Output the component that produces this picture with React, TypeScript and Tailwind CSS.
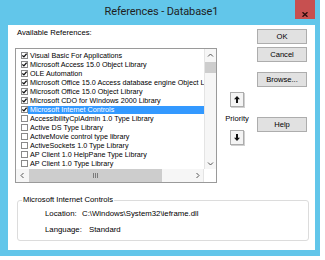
import React from "react";

const ITEMS: [string, boolean][] = [
  ["Visual Basic For Applications", true],
  ["Microsoft Access 15.0 Object Library", true],
  ["OLE Automation", true],
  ["Microsoft Office 15.0 Access database engine Object Library", true],
  ["Microsoft Office 15.0 Object Library", true],
  ["Microsoft CDO for Windows 2000 Library", true],
  ["Microsoft Internet Controls", true],
  ["AccessibilityCplAdmin 1.0 Type Library", false],
  ["Active DS Type Library", false],
  ["ActiveMovie control type library", false],
  ["ActiveSockets 1.0 Type Library", false],
  ["AP Client 1.0 HelpPane Type Library", false],
  ["AP Client 1.0 Type Library", false],
  ["AppIdPolicyEngineApi 1.0 Type Library", false],
];

const SELECTED = 6;

const CheckBox = ({ on }: { on: boolean }) => (
  <span className="flex h-[7px] w-[7px] shrink-0 items-center justify-center border border-[#8a8a8a] bg-white">
    {on && (
      <svg width="5" height="5" viewBox="0 0 5 5">
        <path d="M0.4 2.4 L1.9 3.9 L4.6 0.7" stroke="#111" strokeWidth="1.3" fill="none" />
      </svg>
    )}
  </span>
);

const Chevron = ({ dir }: { dir: "up" | "down" | "left" | "right" }) => {
  const d = {
    up: "M1 4.5 L3.5 2 L6 4.5",
    down: "M1 2.5 L3.5 5 L6 2.5",
    left: "M4.5 1 L2 3.5 L4.5 6",
    right: "M2.5 1 L5 3.5 L2.5 6",
  }[dir];
  return (
    <svg width="7" height="7" viewBox="0 0 7 7">
      <path d={d} stroke="#555" strokeWidth="1" fill="none" />
    </svg>
  );
};

const Button = ({ label, className }: { label: string; className: string }) => (
  <div
    className={`flex h-[15px] w-[50px] items-center justify-center border border-[#adadad] bg-[#e1e1e1] text-[7.6px] text-black ${className}`}
  >
    {label}
  </div>
);

const ArrowButton = ({ up }: { up: boolean }) => (
  <div className="flex h-[15px] w-[14px] items-center justify-center border border-[#acacac] bg-[#f4f4f4] shadow-[1px_1px_0_#d0d0d0]">
    <svg width="6" height="7" viewBox="0 0 6 7">
      {up ? (
        <path d="M3 0 L6 3.2 L4 3.2 L4 7 L2 7 L2 3.2 L0 3.2 Z" fill="#111" />
      ) : (
        <path d="M3 7 L6 3.8 L4 3.8 L4 0 L2 0 L2 3.8 L0 3.8 Z" fill="#111" />
      )}
    </svg>
  </div>
);

const RefList = () => (
  <div className="flex h-[135px] w-[202px] flex-col border border-[#9a9a9a] bg-white">
    <div className="flex h-[120px]">
      <div className="flex-1 overflow-hidden pt-[2px]">
        {ITEMS.map(([name, on], i) => (
          <div key={name} className="flex h-[9px] items-center pl-[5px]">
            <CheckBox on={on} />
            <span
              className={
                i === SELECTED
                  ? "h-[8px] flex-1 whitespace-nowrap bg-[#3399ff] pl-[2px] leading-[8px] text-white"
                  : "h-[8px] flex-1 whitespace-nowrap pl-[2px] leading-[8px] text-black"
              }
            >
              {name}
            </span>
          </div>
        ))}
      </div>
      <div className="flex w-[12px] flex-col border-l border-[#e4e4e4] bg-[#f6f6f6]">
        <div className="flex h-[12px] items-center justify-center">
          <Chevron dir="up" />
        </div>
        <div className="mt-[1px] h-[11px] bg-[#cdcdcd]" />
        <div className="flex-1" />
        <div className="flex h-[12px] items-center justify-center">
          <Chevron dir="down" />
        </div>
      </div>
    </div>
    <div className="flex h-[13px]">
      <div className="flex h-full w-[13px] items-center justify-center bg-[#f6f6f6]">
        <Chevron dir="left" />
      </div>
      <div className="flex h-full w-[133px] items-center justify-center bg-[#cdcdcd]">
        <svg width="5" height="5" viewBox="0 0 5 5">
          <path d="M0.5 0 V5 M2.5 0 V5 M4.5 0 V5" stroke="#666" strokeWidth="0.8" />
        </svg>
      </div>
      <div className="flex-1 bg-[#f6f6f6]" />
      <div className="flex h-full w-[12px] items-center justify-center border-r border-[#e4e4e4] bg-[#f6f6f6]">
        <Chevron dir="right" />
      </div>
      <div className="w-[12px] bg-white" />
    </div>
  </div>
);

export default function App() {
  return (
    <div className="h-[260px] w-[325px] overflow-hidden bg-white font-['Liberation_Sans',Arial,sans-serif]">
      <div className="flex h-[256px] w-[320px] flex-col bg-[#62c6ea]">
        <div className="relative flex h-[25px] items-center justify-center">
          <span className="ml-[3px] font-['Roboto',sans-serif] text-[11px] tracking-[-0.1px] text-[#1e1e1e]">
            References - Database1
          </span>
          <div className="absolute right-[5px] top-0 flex h-[19px] w-[20px] justify-center bg-[#c75050] pt-[12px]">
            <svg width="6" height="5" viewBox="0 0 6 5">
              <path d="M0.5 0.3 L5.5 4.7 M5.5 0.3 L0.5 4.7" stroke="#2a0c0c" strokeWidth="1.4" />
            </svg>
          </div>
        </div>

        <div className="ml-[8px] mr-[5px] flex h-[225px] flex-col bg-white">
          <div className="flex items-start">
            <div className="flex w-[209px] flex-col pl-[7px]">
              <div className="ml-[2px] mt-[3px] h-[10px] text-[7.7px] leading-[10px] text-black">
                Available References:
              </div>
              <div className="mt-[10px] text-[7.2px]">
                <RefList />
              </div>
            </div>

            <div className="mt-[67px] flex w-[40px] flex-col items-center">
              <ArrowButton up />
              <div className="h-[23px] text-[7.6px] leading-[23px] text-black">Priority</div>
              <ArrowButton up={false} />
            </div>

            <div className="flex flex-col">
              <Button label="OK" className="mt-[4px]" />
              <Button label="Cancel" className="mt-[3px]" />
              <Button label="Browse..." className="mt-[10px]" />
              <Button label="Help" className="mt-[30px]" />
            </div>
          </div>

          <fieldset className="ml-[9px] mt-[12px] h-[46px] w-[292px] rounded-[3px] border border-[#dcdcdc]">
            <legend className="ml-[4px] px-[1px] text-[7.7px] leading-[10px] text-black">
              Microsoft Internet Controls
            </legend>
            <div className="mt-[4px] flex h-[10px] items-center pl-[27px] text-[7.8px] text-black">
              <span className="w-[37px]">Location:</span>
              <span>C:\Windows\System32\ieframe.dll</span>
            </div>
            <div className="mt-[6px] flex h-[10px] items-center pl-[27px] text-[7.8px] text-black">
              <span className="w-[44px]">Language:</span>
              <span>Standard</span>
            </div>
          </fieldset>
        </div>
      </div>
    </div>
  );
}
